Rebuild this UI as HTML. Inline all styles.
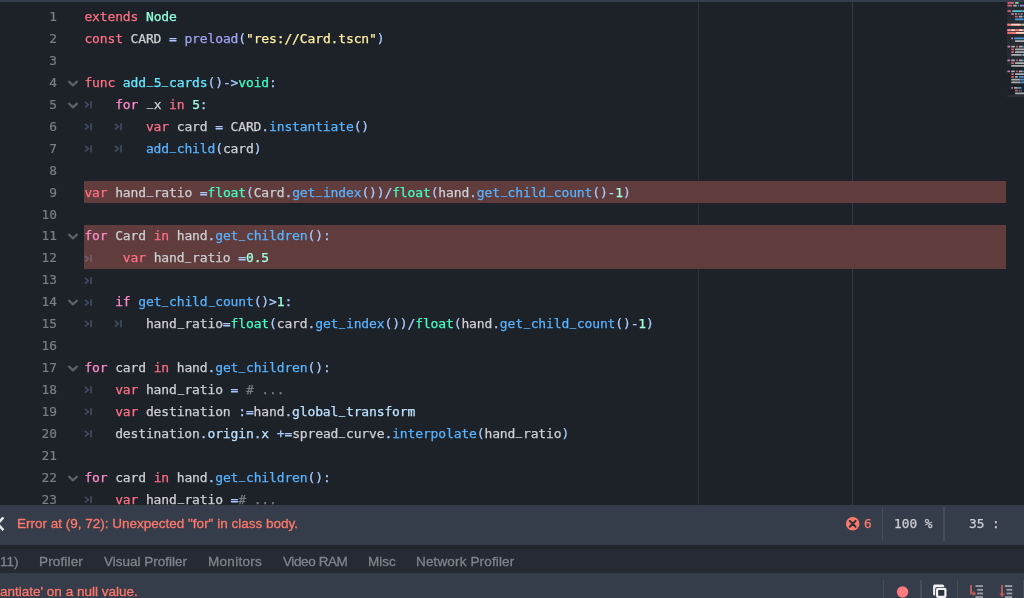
<!DOCTYPE html>
<html lang="en">
<head>
<meta charset="utf-8">
<title>Script Editor</title>
<style>
*{box-sizing:border-box;margin:0;padding:0}
html,body{width:1024px;height:598px;overflow:hidden;background:#1d2229}
body{position:relative;font-family:"Liberation Sans","DejaVu Sans",sans-serif}
#root{position:absolute;left:0;top:0;width:1024px;height:598px;will-change:transform}
#topbar{position:absolute;left:0;top:0;width:1024px;height:2px;background:#363d4a}
#editor{position:absolute;left:0;top:0;width:1024px;height:505px;background:#1d2229;overflow:hidden}
.guide{position:absolute;top:0;width:1px;height:505px;background:#2c313a}
.ln{position:absolute;left:0;width:1007px;height:21.94px}
.ln code{position:absolute;left:84.4px;top:0.6px;height:22px;line-height:22px;white-space:pre;font-family:"DejaVu Sans Mono","Liberation Mono",monospace;font-size:13px;letter-spacing:-0.136px;color:#cdcfd2;-webkit-text-stroke:0.25px}
.no{position:absolute;left:0;width:57px;text-align:right;top:0.6px;line-height:22px;font-weight:normal;font-family:"DejaVu Sans Mono","Liberation Mono",monospace;font-size:12.8px;color:#7a7e86;-webkit-text-stroke:0.2px}
.hl{position:absolute;left:84px;right:1px;top:0;height:21.94px;background:#613c3d}
.fold{position:absolute;left:67px;top:8.3px;width:12px;height:8px;fill:none;stroke:#5a5f69;stroke-width:2.3;stroke-linecap:round;stroke-linejoin:round}
.tab{position:absolute;top:7.8px;width:8.4px;height:7.6px}
.tab{opacity:0.24}
.tab path{fill:none;stroke:#abc9ff;stroke-width:1.7}
.tab rect{fill:#abc9ff}
u{text-decoration:none;display:inline-block;position:relative;top:-2.5px;transform:scaleX(0.82)}
.k{color:#ff7085}
.c{color:#ff8ccc}
.b{color:#42ffc2}
.e{color:#8fffdb}
.d{color:#66e6ff}
.f{color:#57b3ff}
.g{color:#a3a3f5}
.s{color:#ffeda1}
.n{color:#a1ffe0}
.y{color:#abc9ff}
.t{color:#cdcfd2}
.m{color:#bce0ff}
.z{color:#797d84}
#status{position:absolute;left:0;top:505px;width:1024px;height:40px;background:#363d4a}
#gap{position:absolute;left:0;top:545px;width:1024px;height:4px;background:#21262d}
#tabs{position:absolute;left:0;top:548.8px;width:1024px;height:24.6px;background:#252a33}
#bottom{position:absolute;left:0;top:573.3px;width:1024px;height:25px;background:#363d4a}
.ui{position:absolute;white-space:pre;font-size:13.5px;line-height:16px;-webkit-text-stroke:0.3px}
.err{color:#ff786b}
.tb{color:#80848b}
.sep{position:absolute;width:1.8px;background:#474e5a}
.mono{line-height:normal;font-family:"DejaVu Sans Mono","Liberation Mono",monospace;font-size:12.8px;color:#cdcfd2;-webkit-text-stroke:0.25px}
</style>
</head>
<body>
<div id="root">
<div id="editor">
<div class="guide" style="left:698px"></div>
<div class="guide" style="left:852px;background:#343943"></div>
<div class="ln" style="top:5.5px"><b class="no">1</b><code><span class="k">extends</span><span class="t"> </span><span class="e">Node</span></code></div>
<div class="ln" style="top:27.44px"><b class="no">2</b><code><span class="k">const</span><span class="t"> CARD </span><span class="y">=</span><span class="t"> </span><span class="g">preload</span><span class="y">(</span><span class="s">"res://Card.tscn"</span><span class="y">)</span></code></div>
<div class="ln" style="top:49.38px"><b class="no">3</b><code></code></div>
<div class="ln" style="top:71.32px"><b class="no">4</b><svg class="fold" viewBox="0 0 12 8"><path d="M2.1 1.6 L6 5.4 L9.9 1.6" /></svg><code><span class="k">func</span><span class="t"> </span><span class="d">add<u>_</u>5<u>_</u>cards</span><span class="y">()-&gt;</span><span class="b">void</span><span class="y">:</span></code></div>
<div class="ln" style="top:93.26px"><b class="no">5</b><svg class="fold" viewBox="0 0 12 8"><path d="M2.1 1.6 L6 5.4 L9.9 1.6" /></svg><svg class="tab" style="left:83.70px" viewBox="0 0 8.4 7.6"><path d="M0.9 0.9 L4.3 3.8 L0.9 6.7"/><rect x="6.2" y="0.2" width="1.7" height="7.2"/></svg><code>    <span class="c">for</span><span class="t"> <u>_</u>x </span><span class="k">in</span><span class="t"> </span><span class="n">5</span><span class="y">:</span></code></div>
<div class="ln" style="top:115.2px"><b class="no">6</b><svg class="tab" style="left:83.70px" viewBox="0 0 8.4 7.6"><path d="M0.9 0.9 L4.3 3.8 L0.9 6.7"/><rect x="6.2" y="0.2" width="1.7" height="7.2"/></svg><svg class="tab" style="left:114.46px" viewBox="0 0 8.4 7.6"><path d="M0.9 0.9 L4.3 3.8 L0.9 6.7"/><rect x="6.2" y="0.2" width="1.7" height="7.2"/></svg><code>        <span class="k">var</span><span class="t"> card </span><span class="y">=</span><span class="t"> CARD</span><span class="y">.</span><span class="f">instantiate</span><span class="y">()</span></code></div>
<div class="ln" style="top:137.14px"><b class="no">7</b><svg class="tab" style="left:83.70px" viewBox="0 0 8.4 7.6"><path d="M0.9 0.9 L4.3 3.8 L0.9 6.7"/><rect x="6.2" y="0.2" width="1.7" height="7.2"/></svg><svg class="tab" style="left:114.46px" viewBox="0 0 8.4 7.6"><path d="M0.9 0.9 L4.3 3.8 L0.9 6.7"/><rect x="6.2" y="0.2" width="1.7" height="7.2"/></svg><code>        <span class="f">add<u>_</u>child</span><span class="y">(</span><span class="t">card</span><span class="y">)</span></code></div>
<div class="ln" style="top:159.08px"><b class="no">8</b><code></code></div>
<div class="ln" style="top:181.02px"><i class="hl"></i><b class="no">9</b><code><span class="k">var</span><span class="t"> hand<u>_</u>ratio </span><span class="y">=</span><span class="b">float</span><span class="y">(</span><span class="t">Card</span><span class="y">.</span><span class="f">get<u>_</u>index</span><span class="y">())/</span><span class="b">float</span><span class="y">(</span><span class="t">hand</span><span class="y">.</span><span class="f">get<u>_</u>child<u>_</u>count</span><span class="y">()-</span><span class="n">1</span><span class="y">)</span></code></div>
<div class="ln" style="top:202.96px"><b class="no">10</b><code></code></div>
<div class="ln" style="top:224.9px"><i class="hl"></i><b class="no">11</b><svg class="fold" viewBox="0 0 12 8"><path d="M2.1 1.6 L6 5.4 L9.9 1.6" /></svg><code><span class="c">for</span><span class="t"> Card </span><span class="k">in</span><span class="t"> hand</span><span class="y">.</span><span class="f">get<u>_</u>children</span><span class="y">():</span></code></div>
<div class="ln" style="top:246.84px"><i class="hl"></i><b class="no">12</b><svg class="tab" style="left:83.70px" viewBox="0 0 8.4 7.6"><path d="M0.9 0.9 L4.3 3.8 L0.9 6.7"/><rect x="6.2" y="0.2" width="1.7" height="7.2"/></svg><code>    <span class="t"> </span><span class="k">var</span><span class="t"> hand<u>_</u>ratio </span><span class="y">=</span><span class="n">0.5</span></code></div>
<div class="ln" style="top:268.78px"><b class="no">13</b><svg class="tab" style="left:83.70px" viewBox="0 0 8.4 7.6"><path d="M0.9 0.9 L4.3 3.8 L0.9 6.7"/><rect x="6.2" y="0.2" width="1.7" height="7.2"/></svg><code>    </code></div>
<div class="ln" style="top:290.72px"><b class="no">14</b><svg class="fold" viewBox="0 0 12 8"><path d="M2.1 1.6 L6 5.4 L9.9 1.6" /></svg><svg class="tab" style="left:83.70px" viewBox="0 0 8.4 7.6"><path d="M0.9 0.9 L4.3 3.8 L0.9 6.7"/><rect x="6.2" y="0.2" width="1.7" height="7.2"/></svg><code>    <span class="c">if</span><span class="t"> </span><span class="f">get<u>_</u>child<u>_</u>count</span><span class="y">()&gt;</span><span class="n">1</span><span class="y">:</span></code></div>
<div class="ln" style="top:312.66px"><b class="no">15</b><svg class="tab" style="left:83.70px" viewBox="0 0 8.4 7.6"><path d="M0.9 0.9 L4.3 3.8 L0.9 6.7"/><rect x="6.2" y="0.2" width="1.7" height="7.2"/></svg><svg class="tab" style="left:114.46px" viewBox="0 0 8.4 7.6"><path d="M0.9 0.9 L4.3 3.8 L0.9 6.7"/><rect x="6.2" y="0.2" width="1.7" height="7.2"/></svg><code>        <span class="t">hand<u>_</u>ratio</span><span class="y">=</span><span class="b">float</span><span class="y">(</span><span class="t">card</span><span class="y">.</span><span class="f">get<u>_</u>index</span><span class="y">())/</span><span class="b">float</span><span class="y">(</span><span class="t">hand</span><span class="y">.</span><span class="f">get<u>_</u>child<u>_</u>count</span><span class="y">()-</span><span class="n">1</span><span class="y">)</span></code></div>
<div class="ln" style="top:334.6px"><b class="no">16</b><code></code></div>
<div class="ln" style="top:356.54px"><b class="no">17</b><svg class="fold" viewBox="0 0 12 8"><path d="M2.1 1.6 L6 5.4 L9.9 1.6" /></svg><code><span class="c">for</span><span class="t"> card </span><span class="k">in</span><span class="t"> hand</span><span class="y">.</span><span class="f">get<u>_</u>children</span><span class="y">():</span></code></div>
<div class="ln" style="top:378.48px"><b class="no">18</b><svg class="tab" style="left:83.70px" viewBox="0 0 8.4 7.6"><path d="M0.9 0.9 L4.3 3.8 L0.9 6.7"/><rect x="6.2" y="0.2" width="1.7" height="7.2"/></svg><code>    <span class="k">var</span><span class="t"> hand<u>_</u>ratio </span><span class="y">=</span><span class="t"> </span><span class="z"># ...</span></code></div>
<div class="ln" style="top:400.42px"><b class="no">19</b><svg class="tab" style="left:83.70px" viewBox="0 0 8.4 7.6"><path d="M0.9 0.9 L4.3 3.8 L0.9 6.7"/><rect x="6.2" y="0.2" width="1.7" height="7.2"/></svg><code>    <span class="k">var</span><span class="t"> destination </span><span class="y">:=</span><span class="t">hand</span><span class="y">.</span><span class="m">global<u>_</u>transform</span></code></div>
<div class="ln" style="top:422.36px"><b class="no">20</b><svg class="tab" style="left:83.70px" viewBox="0 0 8.4 7.6"><path d="M0.9 0.9 L4.3 3.8 L0.9 6.7"/><rect x="6.2" y="0.2" width="1.7" height="7.2"/></svg><code>    <span class="t">destination</span><span class="y">.</span><span class="m">origin</span><span class="y">.</span><span class="m">x</span><span class="t"> </span><span class="y">+=</span><span class="t">spread<u>_</u>curve</span><span class="y">.</span><span class="f">interpolate</span><span class="y">(</span><span class="t">hand<u>_</u>ratio</span><span class="y">)</span></code></div>
<div class="ln" style="top:444.3px"><b class="no">21</b><code></code></div>
<div class="ln" style="top:466.24px"><b class="no">22</b><svg class="fold" viewBox="0 0 12 8"><path d="M2.1 1.6 L6 5.4 L9.9 1.6" /></svg><code><span class="c">for</span><span class="t"> card </span><span class="k">in</span><span class="t"> hand</span><span class="y">.</span><span class="f">get<u>_</u>children</span><span class="y">():</span></code></div>
<div class="ln" style="top:488.18px"><b class="no">23</b><svg class="tab" style="left:83.70px" viewBox="0 0 8.4 7.6"><path d="M0.9 0.9 L4.3 3.8 L0.9 6.7"/><rect x="6.2" y="0.2" width="1.7" height="7.2"/></svg><code>    <span class="k">var</span><span class="t"> hand<u>_</u>ratio </span><span class="y">=</span><span class="z"># ...</span></code></div>
<svg id="minimap" width="17" height="505" viewBox="1007 0 17 505" style="position:absolute;left:1007px;top:0">
<rect x="1007" y="1.4" width="17" height="64" fill="#ffffff" fill-opacity="0.045"/>
<rect x="1007.40" y="1.92" width="6.55" height="1.75" rx="0.5" fill="#ff7085" fill-opacity="0.8"/>
<rect x="1015.02" y="1.92" width="3.69" height="1.75" rx="0.5" fill="#8fffdb" fill-opacity="0.8"/>
<rect x="1007.40" y="4.67" width="4.64" height="1.75" rx="0.5" fill="#ff7085" fill-opacity="0.8"/>
<rect x="1013.12" y="4.67" width="3.69" height="1.75" rx="0.5" fill="#cdcfd2" fill-opacity="0.8"/>
<rect x="1017.88" y="4.67" width="0.83" height="1.75" rx="0.5" fill="#abc9ff" fill-opacity="0.8"/>
<rect x="1019.79" y="4.67" width="4.64" height="1.75" rx="0.5" fill="#a3a3f5" fill-opacity="0.8"/>
<rect x="1007.40" y="10.15" width="3.69" height="1.75" rx="0.5" fill="#ff7085" fill-opacity="0.8"/>
<rect x="1012.16" y="10.15" width="10.36" height="1.75" rx="0.5" fill="#66e6ff" fill-opacity="0.8"/>
<rect x="1022.65" y="10.15" width="1.79" height="1.75" rx="0.5" fill="#abc9ff" fill-opacity="0.8"/>
<rect x="1011.21" y="12.89" width="2.74" height="1.75" rx="0.5" fill="#ff8ccc" fill-opacity="0.8"/>
<rect x="1015.02" y="12.89" width="1.79" height="1.75" rx="0.5" fill="#cdcfd2" fill-opacity="0.8"/>
<rect x="1017.88" y="12.89" width="1.79" height="1.75" rx="0.5" fill="#ff7085" fill-opacity="0.8"/>
<rect x="1020.74" y="12.89" width="0.83" height="1.75" rx="0.5" fill="#a1ffe0" fill-opacity="0.8"/>
<rect x="1021.69" y="12.89" width="0.83" height="1.75" rx="0.5" fill="#abc9ff" fill-opacity="0.8"/>
<rect x="1015.02" y="15.64" width="2.74" height="1.75" rx="0.5" fill="#ff7085" fill-opacity="0.8"/>
<rect x="1018.84" y="15.64" width="3.69" height="1.75" rx="0.5" fill="#cdcfd2" fill-opacity="0.8"/>
<rect x="1023.60" y="15.64" width="0.83" height="1.75" rx="0.5" fill="#abc9ff" fill-opacity="0.8"/>
<rect x="1015.02" y="18.38" width="8.46" height="1.75" rx="0.5" fill="#57b3ff" fill-opacity="0.8"/>
<rect x="1023.60" y="18.38" width="0.83" height="1.75" rx="0.5" fill="#abc9ff" fill-opacity="0.8"/>
<rect x="1007.3" y="23.72" width="16.7" height="2.04" fill="#e8756a"/>
<rect x="1007.40" y="23.86" width="2.74" height="1.75" rx="0.5" fill="#ff7085" fill-opacity="0.9"/>
<rect x="1011.21" y="23.86" width="9.41" height="1.75" rx="0.5" fill="#ffe2d2" fill-opacity="0.9"/>
<rect x="1021.69" y="23.86" width="0.83" height="1.75" rx="0.5" fill="#abc9ff" fill-opacity="0.9"/>
<rect x="1022.65" y="23.86" width="1.79" height="1.75" rx="0.5" fill="#42ffc2" fill-opacity="0.9"/>
<rect x="1007.3" y="29.20" width="16.7" height="2.04" fill="#e8756a"/>
<rect x="1007.40" y="29.35" width="2.74" height="1.75" rx="0.5" fill="#ff8ccc" fill-opacity="0.9"/>
<rect x="1011.21" y="29.35" width="3.69" height="1.75" rx="0.5" fill="#ffe2d2" fill-opacity="0.9"/>
<rect x="1015.98" y="29.35" width="1.79" height="1.75" rx="0.5" fill="#ff7085" fill-opacity="0.9"/>
<rect x="1018.84" y="29.35" width="3.69" height="1.75" rx="0.5" fill="#ffe2d2" fill-opacity="0.9"/>
<rect x="1022.65" y="29.35" width="0.83" height="1.75" rx="0.5" fill="#abc9ff" fill-opacity="0.9"/>
<rect x="1023.60" y="29.35" width="0.83" height="1.75" rx="0.5" fill="#57b3ff" fill-opacity="0.9"/>
<rect x="1007.3" y="31.94" width="16.7" height="2.04" fill="#e8756a"/>
<rect x="1012.16" y="32.09" width="2.74" height="1.75" rx="0.5" fill="#ff7085" fill-opacity="0.9"/>
<rect x="1015.98" y="32.09" width="8.46" height="1.75" rx="0.5" fill="#ffe2d2" fill-opacity="0.9"/>
<rect x="1011.21" y="37.57" width="1.79" height="1.75" rx="0.5" fill="#ff8ccc" fill-opacity="0.8"/>
<rect x="1014.07" y="37.57" width="10.36" height="1.75" rx="0.5" fill="#57b3ff" fill-opacity="0.8"/>
<rect x="1015.02" y="40.31" width="9.41" height="1.75" rx="0.5" fill="#cdcfd2" fill-opacity="0.8"/>
<rect x="1007.40" y="45.80" width="2.74" height="1.75" rx="0.5" fill="#ff8ccc" fill-opacity="0.8"/>
<rect x="1011.21" y="45.80" width="3.69" height="1.75" rx="0.5" fill="#cdcfd2" fill-opacity="0.8"/>
<rect x="1015.98" y="45.80" width="1.79" height="1.75" rx="0.5" fill="#ff7085" fill-opacity="0.8"/>
<rect x="1018.84" y="45.80" width="3.69" height="1.75" rx="0.5" fill="#cdcfd2" fill-opacity="0.8"/>
<rect x="1022.65" y="45.80" width="0.83" height="1.75" rx="0.5" fill="#abc9ff" fill-opacity="0.8"/>
<rect x="1023.60" y="45.80" width="0.83" height="1.75" rx="0.5" fill="#57b3ff" fill-opacity="0.8"/>
<rect x="1011.21" y="48.54" width="2.74" height="1.75" rx="0.5" fill="#ff7085" fill-opacity="0.8"/>
<rect x="1015.02" y="48.54" width="9.41" height="1.75" rx="0.5" fill="#cdcfd2" fill-opacity="0.8"/>
<rect x="1011.21" y="51.28" width="2.74" height="1.75" rx="0.5" fill="#ff7085" fill-opacity="0.8"/>
<rect x="1015.02" y="51.28" width="9.41" height="1.75" rx="0.5" fill="#cdcfd2" fill-opacity="0.8"/>
<rect x="1011.21" y="54.02" width="10.36" height="1.75" rx="0.5" fill="#cdcfd2" fill-opacity="0.8"/>
<rect x="1021.69" y="54.02" width="0.83" height="1.75" rx="0.5" fill="#abc9ff" fill-opacity="0.8"/>
<rect x="1022.65" y="54.02" width="1.79" height="1.75" rx="0.5" fill="#bce0ff" fill-opacity="0.8"/>
<rect x="1007.40" y="59.51" width="2.74" height="1.75" rx="0.5" fill="#ff8ccc" fill-opacity="0.8"/>
<rect x="1011.21" y="59.51" width="3.69" height="1.75" rx="0.5" fill="#cdcfd2" fill-opacity="0.8"/>
<rect x="1015.98" y="59.51" width="1.79" height="1.75" rx="0.5" fill="#ff7085" fill-opacity="0.8"/>
<rect x="1018.84" y="59.51" width="3.69" height="1.75" rx="0.5" fill="#cdcfd2" fill-opacity="0.8"/>
<rect x="1022.65" y="59.51" width="0.83" height="1.75" rx="0.5" fill="#abc9ff" fill-opacity="0.8"/>
<rect x="1023.60" y="59.51" width="0.83" height="1.75" rx="0.5" fill="#57b3ff" fill-opacity="0.8"/>
<rect x="1011.21" y="62.25" width="2.74" height="1.75" rx="0.5" fill="#ff7085" fill-opacity="0.8"/>
<rect x="1015.02" y="62.25" width="9.41" height="1.75" rx="0.5" fill="#cdcfd2" fill-opacity="0.8"/>
<rect x="1011.21" y="64.99" width="13.22" height="1.75" rx="0.5" fill="#cdcfd2" fill-opacity="0.8"/>
<rect x="1007.40" y="70.47" width="2.74" height="1.75" rx="0.5" fill="#ff8ccc" fill-opacity="0.8"/>
<rect x="1011.21" y="70.47" width="3.69" height="1.75" rx="0.5" fill="#cdcfd2" fill-opacity="0.8"/>
<rect x="1015.98" y="70.47" width="1.79" height="1.75" rx="0.5" fill="#ff7085" fill-opacity="0.8"/>
<rect x="1018.84" y="70.47" width="3.69" height="1.75" rx="0.5" fill="#cdcfd2" fill-opacity="0.8"/>
<rect x="1022.65" y="70.47" width="0.83" height="1.75" rx="0.5" fill="#abc9ff" fill-opacity="0.8"/>
<rect x="1023.60" y="70.47" width="0.83" height="1.75" rx="0.5" fill="#57b3ff" fill-opacity="0.8"/>
<rect x="1011.21" y="73.22" width="2.74" height="1.75" rx="0.5" fill="#ff7085" fill-opacity="0.8"/>
<rect x="1015.02" y="73.22" width="9.41" height="1.75" rx="0.5" fill="#cdcfd2" fill-opacity="0.8"/>
<rect x="1011.21" y="75.96" width="2.74" height="1.75" rx="0.5" fill="#ff7085" fill-opacity="0.8"/>
<rect x="1015.02" y="75.96" width="2.74" height="1.75" rx="0.5" fill="#cdcfd2" fill-opacity="0.8"/>
<rect x="1018.84" y="75.96" width="0.83" height="1.75" rx="0.5" fill="#abc9ff" fill-opacity="0.8"/>
<rect x="1019.79" y="75.96" width="3.69" height="1.75" rx="0.5" fill="#57b3ff" fill-opacity="0.8"/>
<rect x="1023.60" y="75.96" width="0.83" height="1.75" rx="0.5" fill="#abc9ff" fill-opacity="0.8"/>
<rect x="1011.21" y="78.70" width="9.41" height="1.75" rx="0.5" fill="#cdcfd2" fill-opacity="0.8"/>
<rect x="1020.74" y="78.70" width="3.69" height="1.75" rx="0.5" fill="#57b3ff" fill-opacity="0.8"/>
<rect x="1011.21" y="81.44" width="9.41" height="1.75" rx="0.5" fill="#cdcfd2" fill-opacity="0.8"/>
<rect x="1020.74" y="81.44" width="3.69" height="1.75" rx="0.5" fill="#57b3ff" fill-opacity="0.8"/>
<rect x="1011.21" y="86.93" width="1.79" height="1.75" rx="0.5" fill="#ff8ccc" fill-opacity="0.8"/>
<rect x="1014.07" y="86.93" width="3.69" height="1.75" rx="0.5" fill="#cdcfd2" fill-opacity="0.8"/>
<rect x="1017.88" y="86.93" width="0.83" height="1.75" rx="0.5" fill="#abc9ff" fill-opacity="0.8"/>
<rect x="1018.84" y="86.93" width="2.74" height="1.75" rx="0.5" fill="#57b3ff" fill-opacity="0.8"/>
<rect x="1015.02" y="89.67" width="2.74" height="1.75" rx="0.5" fill="#ff7085" fill-opacity="0.8"/>
<rect x="1018.84" y="89.67" width="0.83" height="1.75" rx="0.5" fill="#cdcfd2" fill-opacity="0.8"/>
<rect x="1020.74" y="89.67" width="0.83" height="1.75" rx="0.5" fill="#abc9ff" fill-opacity="0.8"/>
<rect x="1015.02" y="92.41" width="9.41" height="1.75" rx="0.5" fill="#cdcfd2" fill-opacity="0.8"/>
<rect x="1007.3" y="95.13" width="16.7" height="1.8" fill="#ffffff" fill-opacity="0.07"/>
</svg>
</div>
<div id="topbar"></div>
<div id="status">
<svg style="position:absolute;left:0px;top:12px" width="8" height="14" viewBox="0 0 8 14"><path d="M-8 0.3 L3.4 13.2 M3.4 0.3 L-8 13.2" fill="none" stroke="#e6e6e6" stroke-width="2.5"/></svg>
<span class="ui err" style="left:17px;top:11.4px">Error at (9, 72): Unexpected "for" in class body.</span>
<svg style="position:absolute;left:845px;top:11px" width="16" height="16" viewBox="845 516 16 16"><circle cx="852.7" cy="523.8" r="6.8" fill="#ff786b"/><path d="M849.8 520.9 L855.6 526.7 M855.6 520.9 L849.8 526.7" stroke="#2a3039" stroke-width="2" stroke-linecap="round"/></svg>
<span class="ui err mono" style="left:864px;top:11px;color:#ff786b">6</span>
<div class="sep" style="left:881.7px;top:2px;height:34px"></div>
<span class="ui mono" style="left:894px;top:11px">100 %</span>
<div class="sep" style="left:943.1px;top:2px;height:34px"></div>
<span class="ui mono" style="left:969px;top:11px">35 :</span>
<span class="ui mono" style="left:1023px;top:11px">1</span>
</div>
<div id="gap"></div>
<div id="tabs">
<span class="ui tb" style="left:0px;top:5px">11)</span>
<span class="ui tb" style="left:39px;top:5px;letter-spacing:0.15px">Profiler</span>
<span class="ui tb" style="left:104px;top:5px">Visual Profiler</span>
<span class="ui tb" style="left:208px;top:5px;letter-spacing:0.3px">Monitors</span>
<span class="ui tb" style="left:283px;top:5px;letter-spacing:-0.4px">Video RAM</span>
<span class="ui tb" style="left:368px;top:5px">Misc</span>
<span class="ui tb" style="left:416px;top:5px;letter-spacing:0.15px">Network Profiler</span>
</div>
<div id="bottom">
<span class="ui err" style="left:0px;top:11px">antiate' on a null value.</span>
<div class="sep" style="left:882.7px;top:7px;height:18px"></div>
<svg style="position:absolute;left:895px;top:12px" width="15" height="13" viewBox="895 585 15 13"><circle cx="902.6" cy="592" r="5.7" fill="#ff7b80"/></svg>
<div class="sep" style="left:920.3px;top:7px;height:18px"></div>
<svg style="position:absolute;left:931px;top:10px" width="18" height="15" viewBox="931 583 18 15"><rect x="933.1" y="584.6" width="11" height="11" rx="1.6" fill="#f0f0f0"/><rect x="935.2" y="586.9" width="12.2" height="12" rx="1.8" fill="#363d4a"/><rect x="937.1" y="588.8" width="8.3" height="8" rx="0.8" fill="#2b313b" stroke="#f0f0f0" stroke-width="2.2"/></svg>
<div class="sep" style="left:956.5px;top:7px;height:18px"></div>
<svg style="position:absolute;left:968px;top:10px" width="48" height="15" viewBox="968 583 48 15">
<path d="M971 585 V593.5 H974.5" fill="none" stroke="#b95a5a" stroke-width="2"/><path d="M973.2 590.8 L976.2 593.5 L973.2 596.2 Z" fill="#b95a5a"/>
<g fill="#9c9fa6"><rect x="975.5" y="585.2" width="7.5" height="1.8"/><rect x="977.2" y="588.9" width="5.8" height="1.8"/><rect x="977.2" y="592.6" width="5.8" height="1.8"/><rect x="975.5" y="596.2" width="7.5" height="1.8"/></g>
<path d="M1002 585 V595" fill="none" stroke="#b95a5a" stroke-width="2"/><path d="M999.2 593.6 H1004.8 L1002 597.6 Z" fill="#b95a5a"/>
<g fill="#9c9fa6"><rect x="1004.8" y="585.2" width="7.4" height="1.8"/><rect x="1006.5" y="588.9" width="5.7" height="1.8"/><rect x="1006.5" y="592.6" width="5.7" height="1.8"/><rect x="1004.8" y="596.2" width="7.4" height="1.8"/></g>
</svg>
<div class="sep" style="left:1022.5px;top:7px;height:18px"></div>
</div>
</div>
</body>
</html>
